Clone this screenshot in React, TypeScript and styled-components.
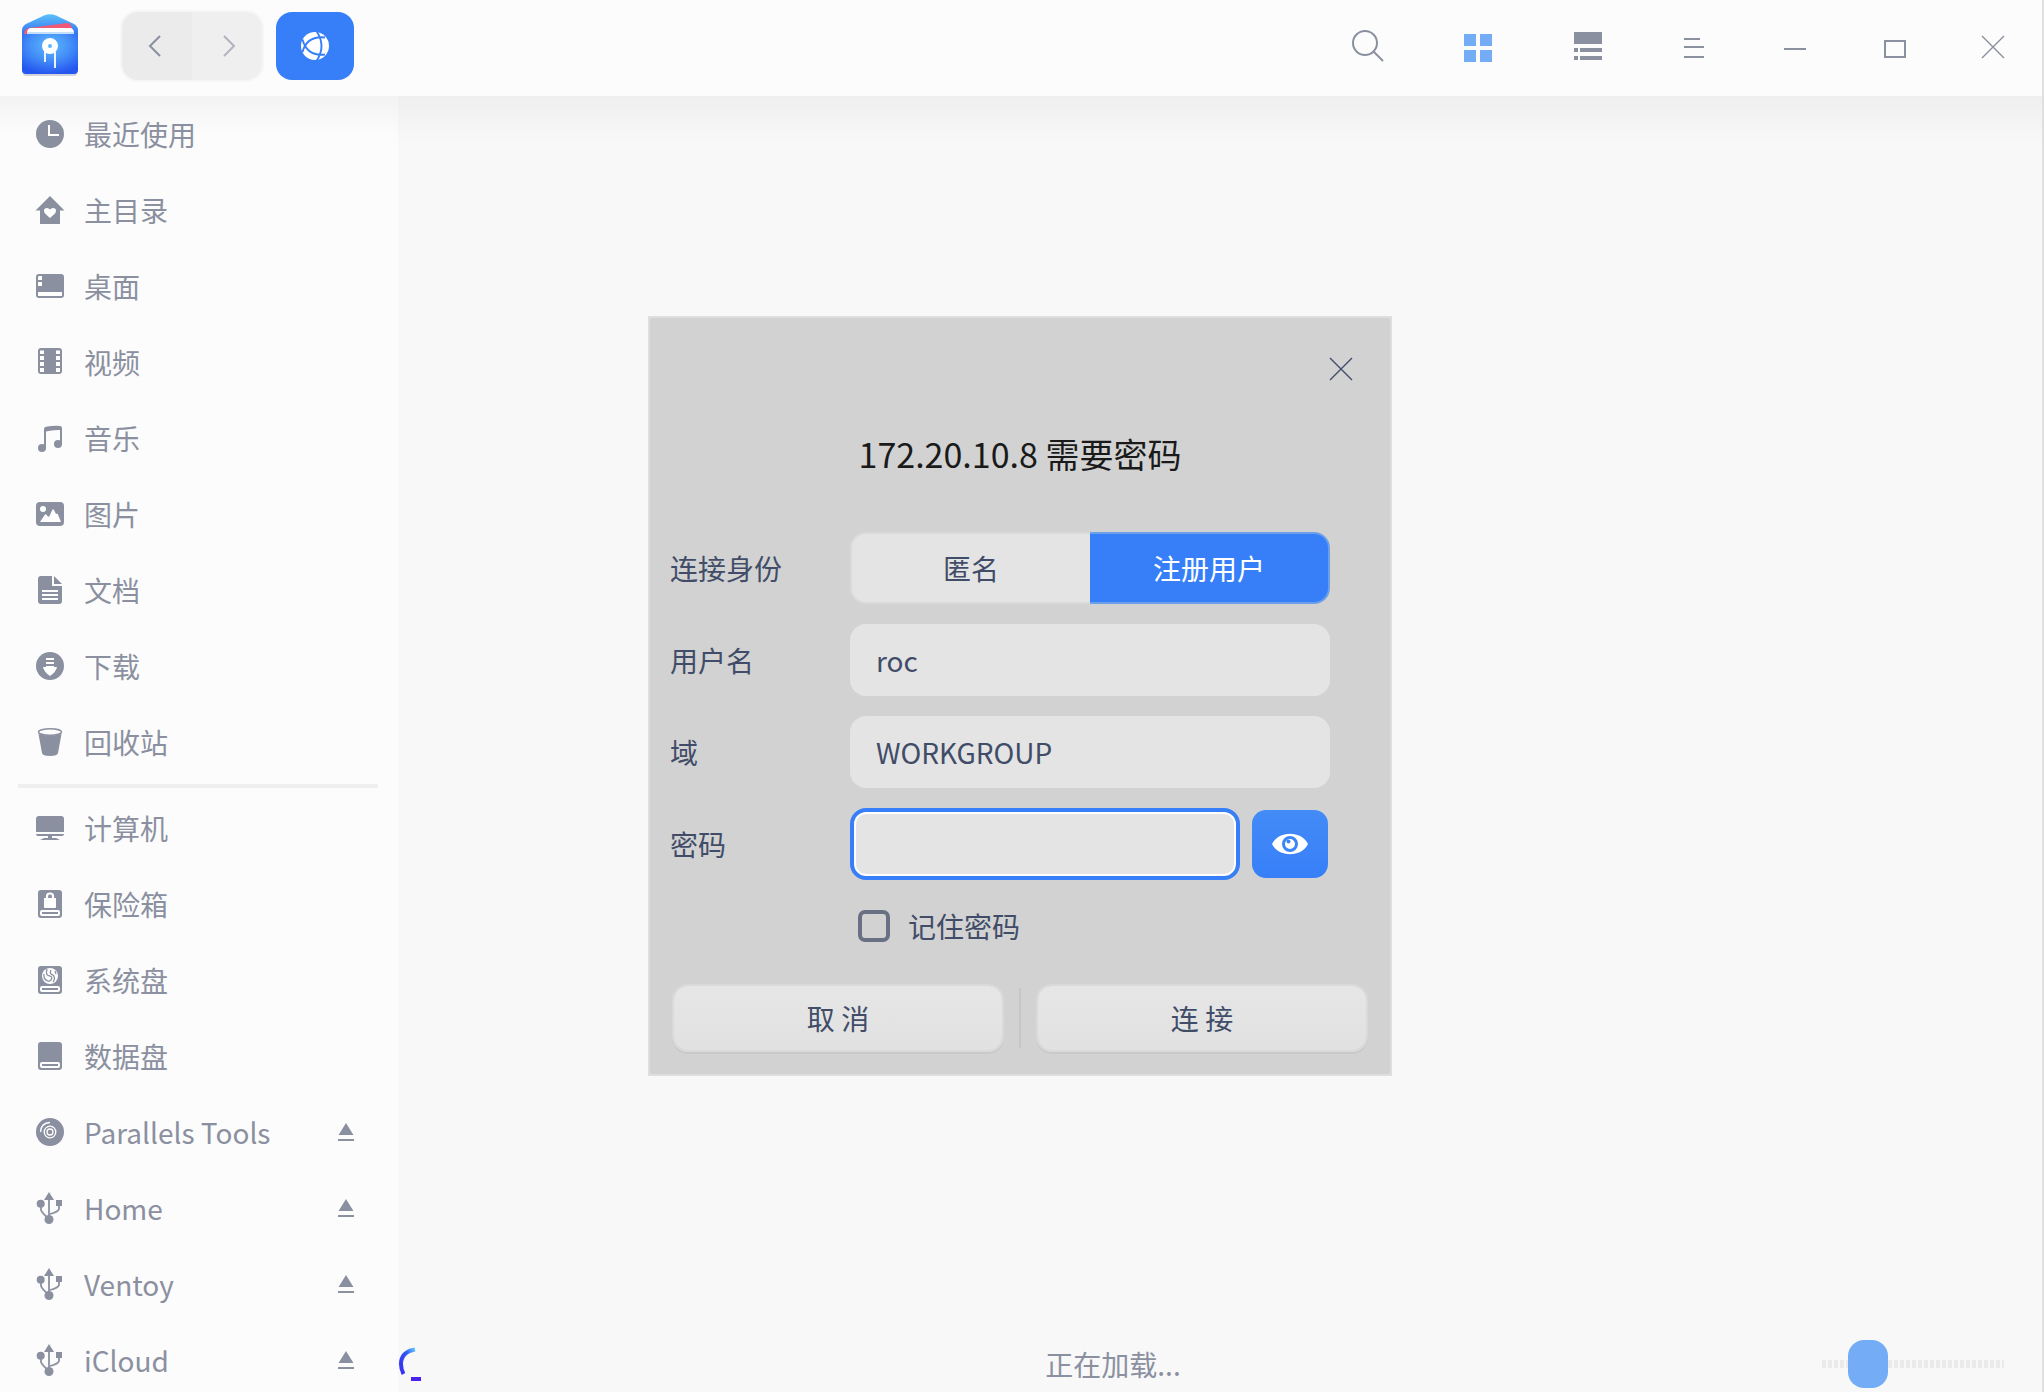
import React, { useState } from "react";
import styled, { createGlobalStyle, css } from "styled-components";

const color = {
  chrome: "#fcfcfc",
  canvas: "#f8f8f8",
  muted: "#8b90a0",
  ink: "#414d68",
  blue: "#377ff8",
  softBlue: "#74adf6",
  field: "#e4e4e4",
  dialog: "#d2d2d2",
};

const Global = createGlobalStyle`
  *, *::before, *::after { box-sizing: border-box; }
  body {
    margin: 0;
    background: ${color.canvas};
    overflow: hidden;
  }
  body, button, input {
    font-family: "Noto Sans CJK SC", "Noto Sans", sans-serif;
    font-size: 28px;
    line-height: 40px;
  }
  svg { display: block; flex: none; overflow: visible; }
`;

const plainButton = css`
  appearance: none;
  border: 0;
  padding: 0;
  margin: 0;
  background: none;
  color: inherit;
  display: flex;
  align-items: center;
  justify-content: center;
  cursor: pointer;
`;

const Window = styled.div`
  display: flex;
  flex-direction: column;
  height: 100vh;
  overflow: hidden;
  border-right: 2px solid #e0e0e0;
  background: ${color.canvas};
`;

const TitleBar = styled.header`
  flex: none;
  display: flex;
  align-items: center;
  height: 96px;
  padding: 0 18px 4px 20px;
  background: ${color.chrome};
  color: ${color.muted};
`;

const NavGroup = styled.div`
  display: flex;
  margin-left: 40px;
  border: 2px solid #f6f6f6;
  border-radius: 18px;
  overflow: hidden;
`;

const NavButton = styled.button<{ $dim?: boolean }>`
  ${plainButton}
  width: 70px;
  height: 68px;
  padding: ${(p) => (p.$dim ? "0 0 0 4px" : "0 4px 0 0")};
  background: ${(p) => (p.$dim ? "#efefef" : "#ebebeb")};
  color: ${(p) => (p.$dim ? "#b1b4be" : color.muted)};
`;

const NetworkButton = styled.button`
  ${plainButton}
  width: 78px;
  height: 68px;
  margin-left: 12px;
  border-radius: 16px;
  background: ${color.blue};
`;

const ViewTools = styled.div`
  display: flex;
  gap: 50px;
  margin-left: auto;
`;

const WindowControls = styled.div`
  display: flex;
  gap: 40px;
  margin-left: 46px;
`;

const ToolButton = styled.button`
  ${plainButton}
  width: 60px;
  height: 60px;
`;

const Body = styled.div`
  flex: 1;
  min-height: 0;
  display: flex;
`;

const Sidebar = styled.nav`
  flex: none;
  width: 398px;
  overflow: hidden;
  background: linear-gradient(#f3f3f3, ${color.chrome} 40px);
`;

const PlaceList = styled.ul`
  list-style: none;
  margin: 0;
  padding: 0;
`;

const Place = styled.li`
  display: flex;
  align-items: center;
  justify-content: space-between;
  height: 76px;
  padding: 0 34px 0 36px;
  color: ${color.muted};
`;

const PlaceLink = styled.a`
  display: flex;
  align-items: center;
  gap: 20px;
  color: inherit;
  text-decoration: none;
`;

const EjectButton = styled.button`
  ${plainButton}
  width: 36px;
  height: 36px;
`;

const Separator = styled.hr`
  height: 4px;
  margin: 4px 20px 2px 18px;
  border: 0;
  background: #efefef;
`;

const Content = styled.main`
  flex: 1;
  min-width: 0;
  display: flex;
  flex-direction: column;
  justify-content: flex-end;
  background: linear-gradient(#efefef, ${color.canvas} 48px);
`;

const StatusBar = styled.footer`
  display: flex;
  align-items: center;
  height: 52px;
  padding: 0 38px 4px 2px;
  color: ${color.muted};
`;

const StatusText = styled.span`
  flex: 1;
  text-align: center;
`;

const ZoomSlider = styled.input`
  appearance: none;
  width: 182px;
  height: 48px;
  margin: 0 0 0 20px;
  background: repeating-linear-gradient(to right, #eaeaea 0 4px, transparent 4px 6px) left center / 100% 8px no-repeat;

  &::-webkit-slider-thumb {
    appearance: none;
    width: 40px;
    height: 48px;
    border-radius: 16px;
    background: ${color.softBlue};
  }
`;

const Overlay = styled.div`
  position: fixed;
  inset: 0;
  display: flex;
  align-items: center;
  justify-content: center;
  padding-right: 4px;
`;

const Dialog = styled.form`
  width: 744px;
  padding-bottom: 22px;
  border: 2px solid #dedede;
  background: ${color.dialog};
  color: ${color.ink};
`;

const DialogTop = styled.div`
  display: flex;
  justify-content: flex-end;
  padding: 31px 29px 0 0;
`;

const DialogClose = styled.button`
  ${plainButton}
  width: 40px;
  height: 40px;
`;

const DialogTitle = styled.h1`
  margin: 45px 0 0;
  font-size: 34px;
  line-height: 40px;
  font-weight: 400;
  text-align: center;
  color: #1a1a1a;
`;

const Fields = styled.div`
  display: grid;
  grid-template-columns: 180px 1fr;
  row-gap: 20px;
  align-items: center;
  margin-top: 58px;
  padding: 0 60px 0 20px;
`;

const Segmented = styled.div`
  display: grid;
  grid-template-columns: 1fr 1fr;
  height: 72px;
`;

const Segment = styled.button<{ $on: boolean }>`
  ${plainButton}
  border: 2px solid ${(p) => (p.$on ? "#6ba0e9" : "#dadada")};
  background: ${(p) => (p.$on ? color.blue : color.field)};
  color: ${(p) => (p.$on ? "#fff" : color.ink)};

  &:first-child {
    border-right: 0;
    border-radius: 16px 0 0 16px;
  }
  &:last-child {
    border-left: 0;
    border-radius: 0 16px 16px 0;
  }
`;

const TextBox = styled.input`
  width: 100%;
  min-width: 0;
  height: 72px;
  padding: 0 26px;
  border: 0;
  border-radius: 16px;
  outline: 0;
  background: ${color.field};
  color: ${color.ink};
`;

const PasswordBox = styled(TextBox)`
  flex: 1;
  border: 4px solid ${color.blue};
  box-shadow: inset 0 0 0 2px #fff;
`;

const PasswordRow = styled.div`
  display: flex;
  align-items: center;
  gap: 12px;
  padding-right: 2px;
`;

const RevealButton = styled.button`
  ${plainButton}
  width: 76px;
  height: 68px;
  border-radius: 14px;
  background: linear-gradient(#438bf6, ${color.blue});
`;

const Remember = styled.label`
  display: flex;
  align-items: center;
  gap: 18px;
  height: 32px;
  margin: 30px 0 0 208px;
`;

const TickBox = styled.input`
  appearance: none;
  width: 32px;
  height: 32px;
  margin: 0;
  border: 4px solid #697084;
  border-radius: 7px;

  &:checked {
    background: ${color.blue};
  }
`;

const Actions = styled.div`
  display: flex;
  align-items: center;
  margin-top: 42px;
  padding: 0 22px;
`;

const ActionDivider = styled.span`
  width: 2px;
  height: 60px;
  margin: 0 15px;
  background: #c6c6c6;
`;

const ActionButton = styled.button`
  ${plainButton}
  flex: 1;
  height: 68px;
  border: 2px solid #dadada;
  border-radius: 16px;
  background: linear-gradient(#e6e6e6, #e1e1e1);
  background-clip: padding-box;
  box-shadow: 0 2px 0 rgba(0, 0, 0, 0.04);
`;

type IconName =
  | "clock" | "home" | "desktop" | "video" | "music" | "picture" | "document" | "download"
  | "trash" | "computer" | "vault" | "system" | "drive" | "disc" | "usb";

const DriveShape = () => (
  <>
    <rect x="2" width="24" height="28" rx="3" />
    <rect x="4" y="20" width="20" height="6" rx="2" fill="#fff" />
    <rect x="6" y="22" width="16" height="2" />
  </>
);

const shapes: Record<IconName, React.ReactNode> = {
  clock: (
    <>
      <circle cx="14" cy="14" r="14" />
      <path d="M13 5V15H23" fill="none" stroke="#fff" strokeWidth="2" />
    </>
  ),
  home: (
    <>
      <path d="M14 0L28.500 14.500H24V28H4V14.500H-.5Z" />
      <path d="M14 22L9 17.500Q7 14.500 9 12.500Q12 11 14 13.500Q16 11 19 12.500Q21 14.500 19 17.500Z" fill="#fff" />
    </>
  ),
  desktop: (
    <>
      <rect y="2" width="28" height="24" rx="3" />
      <path d="M2 4.500L3.500 4H6V8H2ZM2 10H6V14H2ZM2 20H26V24H2Z" fill="#fff" />
    </>
  ),
  video: (
    <>
      <rect x="2" width="24" height="26" rx="3" />
      <path
        d="M4 2.500H8V6H4ZM4 8H8V12H4ZM4 14H8V18H4ZM4 20H8V24H4ZM20 2.500H24V6H20ZM20 8H24V12H20ZM20 14H24V18H20ZM20 20H24V24H20Z"
        fill="#fff"
      />
    </>
  ),
  music: (
    <>
      <path d="M8 5Q8 3 10 2.800Q17 1.500 24 2Q26 2 26 4V20H24V6Q17 5.500 10 7.500V24H8Z" />
      <circle cx="6" cy="24" r="4" />
      <circle cx="22" cy="20" r="4" />
    </>
  ),
  picture: (
    <>
      <rect y="2" width="28" height="24" rx="4" />
      <circle cx="7" cy="9" r="3" fill="#fff" />
      <path d="M4 22L9 14.500Q10 13.500 11.500 16L13 17L16.500 9.500Q17.500 8.500 18.500 11L20 14L21.500 13.500L25 22Z" fill="#fff" />
    </>
  ),
  document: (
    <>
      <path d="M5 0H16V10H26V25Q26 28 23 28H5Q2 28 2 25V3Q2 0 5 0Z" />
      <path d="M18 0L26 8H18Z" />
      <path d="M6 15H22M6 19H22M6 23H22" stroke="#fff" strokeWidth="1.800" />
    </>
  ),
  download: (
    <>
      <circle cx="14" cy="14" r="14" />
      <path d="M10 6H18V8H10ZM10 10H18V12H10ZM10 14H18V15H21Q20 20 14 24Q8 20 7 15H10Z" fill="#fff" />
    </>
  ),
  trash: (
    <>
      <path d="M2.500 6Q14 9 25.500 6L22 25Q21.500 28 14 28Q6.500 28 6 25Z" />
      <ellipse cx="14" cy="4" rx="11.500" ry="3.200" fill={color.chrome} stroke="currentColor" strokeWidth="1.400" />
    </>
  ),
  computer: (
    <path d="M3 2H25Q28 2 28 5V18H0V5Q0 2 3 2ZM0 20H28Q28 22 26 22H16V24H20L24 26H4L8 24H12V22H2Q0 22 0 20Z" />
  ),
  vault: (
    <>
      <DriveShape />
      <path d="M8 8H20V17Q20 18 19 18H9Q8 18 8 17Z" fill="#fff" />
      <path d="M11 9V6Q11 3.500 14 3.500Q17 3.500 17 6V9" fill="none" stroke="#fff" strokeWidth="2.200" />
    </>
  ),
  system: (
    <>
      <DriveShape />
      <circle cx="14" cy="10" r="8" fill="#fff" />
      <path d="M11 3Q9 10 14 10Q17 11 15 14Q12 17 8 12M15 4Q13 8 17 9Q20 12 17 16M8 8Q7 13 12 15M19 5L20 8" fill="none" stroke="currentColor" strokeWidth="1.300" />
    </>
  ),
  drive: <DriveShape />,
  disc: (
    <>
      <circle cx="14" cy="14" r="14" />
      <g fill="none" stroke="#fff" strokeWidth="1.300">
        <circle cx="14" cy="14" r="3" />
        <circle cx="14" cy="14" r="5.800" />
        <path d="M4.500 14Q5 5 14 4.500" />
      </g>
    </>
  ),
  usb: (
    <>
      <path d="M13 -2L18 6H8ZM20 6H26V12H20Z" />
      <circle cx="4.700" cy="9.800" r="4" />
      <circle cx="13" cy="25.500" r="4.500" />
      <path d="M13 4V25M5 10V16Q6 19 12 24M23 10V15Q22 18 14 20" fill="none" stroke="currentColor" strokeWidth="1.800" />
    </>
  ),
};

const PlaceIcon = ({ name }: { name: IconName }) => (
  <svg width="28" height="28" viewBox="0 0 28 28" fill="currentColor" aria-hidden="true">
    {shapes[name]}
  </svg>
);

const AppLogo = () => (
  <svg width="60" height="64" viewBox="0 0 60 64" aria-hidden="true">
    <defs>
      <radialGradient id="folder" cx="50%" cy="28%" r="72%">
        <stop offset="0" stopColor="#5cb8fb" />
        <stop offset="0.5" stopColor="#4590f8" />
        <stop offset="1" stopColor="#2557f0" />
      </radialGradient>
      <linearGradient id="flap" x1="0" y1="0" x2="0" y2="1">
        <stop offset="0" stopColor="#5cc0fa" />
        <stop offset="1" stopColor="#2f6df0" />
      </linearGradient>
    </defs>
    <rect x="3" y="50" width="54" height="12" rx="3" fill="#d3d4da" />
    <path d="M2 22V16Q2 12 7 9.500L24 1.500Q30 -1 36 1.500L53 9.500Q58 12 58 16V22Z" fill="url(#flap)" />
    <path d="M4 20Q4 15 9 14L47 9Q51 9 52 14V20Z" fill="#ee5a78" />
    <path d="M7 20V18Q8 14 11 14H50Q53 14 54 18V20Z" fill="#fff" />
    <path d="M2 20H58V56Q58 60 54 60H6Q2 60 2 56Z" fill="url(#folder)" />
    <rect x="7" y="18" width="47" height="2" fill="#c6dff8" />
    <circle cx="30" cy="32" r="5" fill="none" stroke="#fff" strokeWidth="6" />
    <path d="M25 38V48M35 38V54" stroke="#fff" strokeWidth="1.800" />
  </svg>
);

const Chevron = ({ flip }: { flip?: boolean }) => (
  <svg width="14" height="24" viewBox="0 0 14 24" fill="none" stroke="currentColor" strokeWidth="2" aria-hidden="true">
    <path d={flip ? "M2 2L12 12L2 22" : "M12 2L2 12L12 22"} />
  </svg>
);

const Globe = () => (
  <svg width="28" height="28" viewBox="0 0 28 28" aria-hidden="true">
    <circle cx="14" cy="14" r="14" fill="#fff" />
    <g fill="none" stroke={color.blue} strokeWidth="1.900">
      <path d="M15.500 -1Q25.500 14 15.500 29" />
      <path d="M24 5.500Q6 3.500 1.500 20" />
      <path d="M1.500 7.500Q6 24.500 24 22.500" />
    </g>
  </svg>
);

const Cross = () => (
  <svg width="22" height="22" viewBox="0 0 22 22" stroke="currentColor" strokeWidth="1.400" aria-hidden="true">
    <path d="M0 0L22 22M22 0L0 22" />
  </svg>
);

const Eject = () => (
  <svg width="16" height="18" viewBox="0 0 16 18" fill="currentColor" aria-hidden="true">
    <path d="M8 0L15.500 12H.5ZM0 16H16V18H0Z" />
  </svg>
);

const Spinner = () => (
  <svg width="24" height="34" viewBox="0 0 24 34" fill="none" strokeWidth="4" aria-hidden="true">
    <defs>
      <linearGradient id="spin" x1="1" y1="0" x2="0" y2="1">
        <stop offset="0" stopColor="#62c4ff" />
        <stop offset="0.400" stopColor="#2f55f5" />
        <stop offset="1" stopColor="#3a2df0" />
      </linearGradient>
    </defs>
    <path d="M15 2.500Q1 5 1 17Q1 22 3.500 27" stroke="url(#spin)" />
    <path d="M11 32H21" stroke="#4a22f0" />
  </svg>
);

type PlaceItem = { icon: IconName; name: string; ejectable?: boolean };

const userPlaces: PlaceItem[] = [
  { icon: "clock", name: "最近使用" },
  { icon: "home", name: "主目录" },
  { icon: "desktop", name: "桌面" },
  { icon: "video", name: "视频" },
  { icon: "music", name: "音乐" },
  { icon: "picture", name: "图片" },
  { icon: "document", name: "文档" },
  { icon: "download", name: "下载" },
  { icon: "trash", name: "回收站" },
];

const devices: PlaceItem[] = [
  { icon: "computer", name: "计算机" },
  { icon: "vault", name: "保险箱" },
  { icon: "system", name: "系统盘" },
  { icon: "drive", name: "数据盘" },
  { icon: "disc", name: "Parallels Tools", ejectable: true },
  { icon: "usb", name: "Home", ejectable: true },
  { icon: "usb", name: "Ventoy", ejectable: true },
  { icon: "usb", name: "iCloud", ejectable: true },
];

const Places = ({ items }: { items: PlaceItem[] }) => (
  <PlaceList>
    {items.map((item) => (
      <Place key={item.name}>
        <PlaceLink href="#">
          <PlaceIcon name={item.icon} />
          {item.name}
        </PlaceLink>
        {item.ejectable && (
          <EjectButton type="button" aria-label={`弹出 ${item.name}`}>
            <Eject />
          </EjectButton>
        )}
      </Place>
    ))}
  </PlaceList>
);

const Toolbar = () => (
  <TitleBar>
    <AppLogo />
    <NavGroup>
      <NavButton type="button" aria-label="后退"><Chevron /></NavButton>
      <NavButton type="button" aria-label="前进" $dim><Chevron flip /></NavButton>
    </NavGroup>
    <NetworkButton type="button" aria-label="网络"><Globe /></NetworkButton>
    <ViewTools>
      <ToolButton type="button" aria-label="搜索">
        <svg width="32" height="32" viewBox="0 0 32 32" fill="none" stroke="currentColor" strokeWidth="2">
          <circle cx="13" cy="13" r="12" />
          <path d="M21.500 21.500L31 31" />
        </svg>
      </ToolButton>
      <ToolButton type="button" aria-label="图标视图">
        <svg width="28" height="32" viewBox="0 0 28 32" fill={color.softBlue}>
          <path d="M0 4H12V16H0ZM16 4H28V16H16ZM0 20H12V32H0ZM16 20H28V32H16Z" />
        </svg>
      </ToolButton>
      <ToolButton type="button" aria-label="列表视图">
        <svg width="28" height="28" viewBox="0 0 28 28" fill="currentColor">
          <path d="M0 0H28V12H0ZM0 16H4V20H0ZM6 16H28V20H6ZM0 24H4V28H0ZM6 24H28V28H6Z" />
        </svg>
      </ToolButton>
    </ViewTools>
    <WindowControls>
      <ToolButton type="button" aria-label="菜单">
        <svg width="20" height="24" viewBox="0 0 20 24" fill="currentColor">
          <path d="M0 4H16V6H0ZM0 12H20V14H0ZM0 22H20V24H0Z" />
        </svg>
      </ToolButton>
      <ToolButton type="button" aria-label="最小化">
        <svg width="22" height="24" viewBox="0 0 22 24" fill="currentColor">
          <path d="M1 14H23V16H1Z" />
        </svg>
      </ToolButton>
      <ToolButton type="button" aria-label="最大化">
        <svg width="22" height="24" viewBox="0 0 22 24" fill="none" stroke="currentColor" strokeWidth="2">
          <path d="M2 7H22V23H2Z" />
        </svg>
      </ToolButton>
      <ToolButton type="button" aria-label="关闭">
        <svg width="22" height="24" viewBox="0 0 22 24" stroke="currentColor" strokeWidth="1.400">
          <path d="M-1 2L21 24M21 2L-1 24" />
        </svg>
      </ToolButton>
    </WindowControls>
  </TitleBar>
);

const LoginDialog = () => {
  const [registered, setRegistered] = useState(true);
  const [revealed, setRevealed] = useState(false);
  return (
    <Overlay>
      <Dialog role="dialog" aria-labelledby="dialog-title" onSubmit={(e) => e.preventDefault()}>
        <DialogTop>
          <DialogClose type="button" aria-label="关闭对话框"><Cross /></DialogClose>
        </DialogTop>
        <DialogTitle id="dialog-title">172.20.10.8 需要密码</DialogTitle>
        <Fields>
          <span id="identity">连接身份</span>
          <Segmented role="group" aria-labelledby="identity">
            <Segment type="button" $on={!registered} aria-pressed={!registered} onClick={() => setRegistered(false)}>
              匿名
            </Segment>
            <Segment type="button" $on={registered} aria-pressed={registered} onClick={() => setRegistered(true)}>
              注册用户
            </Segment>
          </Segmented>
          <label htmlFor="user">用户名</label>
          <TextBox id="user" type="text" defaultValue="roc" />
          <label htmlFor="domain">域</label>
          <TextBox id="domain" type="text" defaultValue="WORKGROUP" />
          <label htmlFor="password">密码</label>
          <PasswordRow>
            <PasswordBox id="password" type={revealed ? "text" : "password"} />
            <RevealButton type="button" aria-label="显示密码" onClick={() => setRevealed(!revealed)}>
              <svg width="36" height="20" viewBox="0 0 36 20">
                <path d="M0 10Q3 4 9 1.500Q18 -2 27 1.500Q33 4 36 10Q33 16 27 18.500Q18 22 9 18.500Q3 16 0 10Z" fill="#fff" />
                <circle cx="18" cy="10" r="6.500" fill="#fff" stroke="#3d86f7" strokeWidth="3" />
                <circle cx="16.500" cy="7.500" r="2" fill="#3d86f7" />
              </svg>
            </RevealButton>
          </PasswordRow>
        </Fields>
        <Remember>
          <TickBox type="checkbox" />
          记住密码
        </Remember>
        <Actions>
          <ActionButton type="button">取 消</ActionButton>
          <ActionDivider />
          <ActionButton type="submit">连 接</ActionButton>
        </Actions>
      </Dialog>
    </Overlay>
  );
};

export default function App() {
  return (
    <>
      <Global />
      <Window>
        <Toolbar />
        <Body>
          <Sidebar>
            <Places items={userPlaces} />
            <Separator />
            <Places items={devices} />
          </Sidebar>
          <Content>
            <StatusBar>
              <Spinner />
              <StatusText role="status">正在加载...</StatusText>
              <ZoomSlider type="range" min="0" max="100" defaultValue="18" aria-label="图标大小" />
            </StatusBar>
          </Content>
        </Body>
      </Window>
      <LoginDialog />
    </>
  );
}
